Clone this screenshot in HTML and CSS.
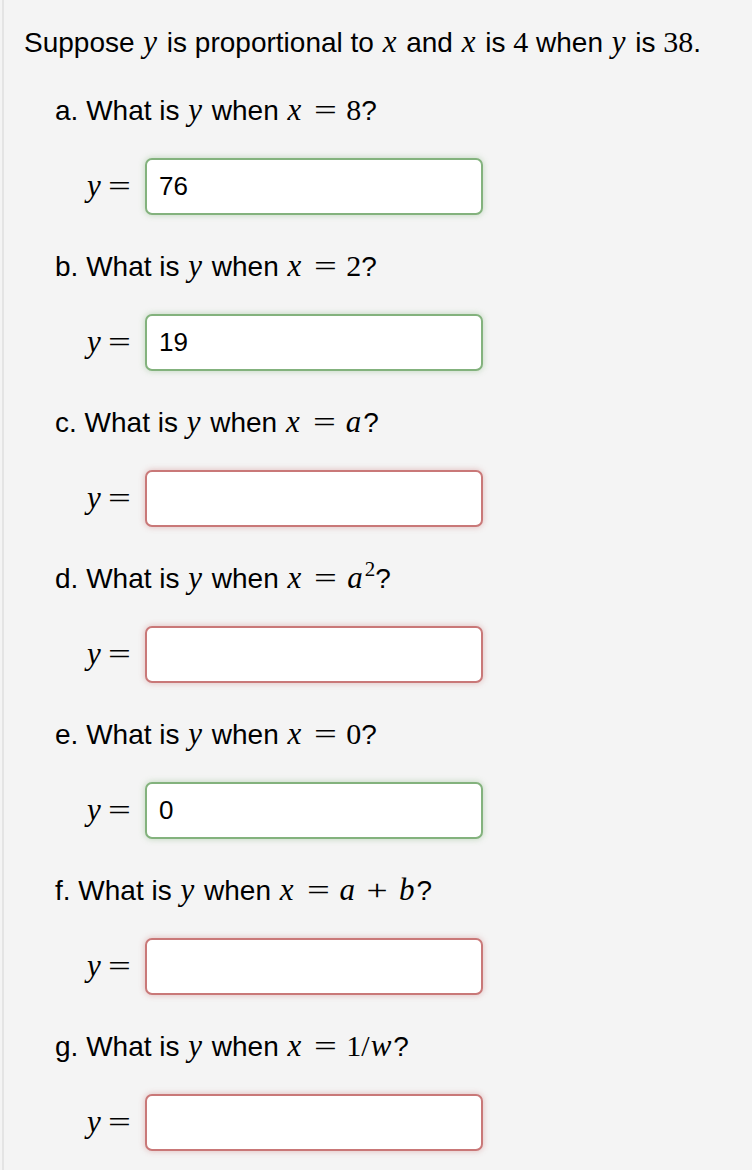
FILE: index.html
```html
<!DOCTYPE html>
<html>
<head>
<meta charset="utf-8">
<link rel="stylesheet" href="styles.css">
</head>
<body>
<div class="page">
  <p class="title">Suppose <i class="m">y</i> is proportional to <i class="m">x</i> and <i class="m">x</i> is <span class="n">4</span> when <i class="m">y</i> is <span class="n">38</span>.</p>

  <div class="item">
    <p class="q">a. What is <i class="m">y</i> when <i class="m">x</i><span class="eq">=</span><span class="n">8</span>?</p>
    <div class="ans"><span class="lbl"><i class="m">y</i><span class="eq eq2">=</span></span><div class="inp ok">76</div></div>
  </div>

  <div class="item">
    <p class="q">b. What is <i class="m">y</i> when <i class="m">x</i><span class="eq">=</span><span class="n">2</span>?</p>
    <div class="ans"><span class="lbl"><i class="m">y</i><span class="eq eq2">=</span></span><div class="inp ok">19</div></div>
  </div>

  <div class="item">
    <p class="q">c. What is <i class="m">y</i> when <i class="m">x</i><span class="eq">=</span><i class="m">a</i>?</p>
    <div class="ans"><span class="lbl"><i class="m">y</i><span class="eq eq2">=</span></span><div class="inp bad"></div></div>
  </div>

  <div class="item">
    <p class="q">d. What is <i class="m">y</i> when <i class="m">x</i><span class="eq">=</span><i class="m">a</i><sup class="n sup">2</sup>?</p>
    <div class="ans"><span class="lbl"><i class="m">y</i><span class="eq eq2">=</span></span><div class="inp bad"></div></div>
  </div>

  <div class="item">
    <p class="q">e. What is <i class="m">y</i> when <i class="m">x</i><span class="eq">=</span><span class="n">0</span>?</p>
    <div class="ans"><span class="lbl"><i class="m">y</i><span class="eq eq2">=</span></span><div class="inp ok">0</div></div>
  </div>

  <div class="item">
    <p class="q">f. What is <i class="m">y</i> when <i class="m">x</i><span class="eq">=</span><i class="m">a</i><span class="plus">+</span><i class="m">b</i>?</p>
    <div class="ans"><span class="lbl"><i class="m">y</i><span class="eq eq2">=</span></span><div class="inp bad"></div></div>
  </div>

  <div class="item">
    <p class="q">g. What is <i class="m">y</i> when <i class="m">x</i><span class="eq">=</span><span class="n">1/</span><i class="m">w</i>?</p>
    <div class="ans"><span class="lbl"><i class="m">y</i><span class="eq eq2">=</span></span><div class="inp bad"></div></div>
  </div>
</div>
</body>
</html>
```

FILE: styles.css
```css
html, body {
  margin: 0;
  padding: 0;
  background: #f4f4f4;
}
body {
  font-family: "Liberation Sans", Arial, sans-serif;
  font-size: 28px;
  color: #000;
}
.page {
  margin-left: 2px;
  border-left: 2px solid #e4e4e4;
  min-height: 1170px;
  box-sizing: border-box;
  padding: 27px 0 0 20px;
}
p {
  margin: 0;
  line-height: 30px;
  height: 30px;
  white-space: nowrap;
}
.title {
  margin-bottom: 38px;
}
.m {
  font-family: "Liberation Serif", "Times New Roman", serif;
  font-style: italic;
  font-size: 31px;
  padding: 0 2px 0 1px;
}
.n {
  font-family: "Liberation Serif", "Times New Roman", serif;
  font-size: 30px;
}
.sup {
  font-size: 21px;
  vertical-align: 12px;
  line-height: 0;
}
.eq {
  display: inline-block;
  font-family: "Liberation Serif", "Times New Roman", serif;
  font-size: 30px;
  width: 23px;
  text-align: center;
  margin: 0 9px 0 11px;
  transform: scaleX(1.35);
}
.plus {
  display: inline-block;
  font-family: "Liberation Serif", "Times New Roman", serif;
  font-size: 30px;
  width: 22px;
  text-align: center;
  margin: 0 10px 0 9px;
  transform: scaleX(1.25);
}
.eq2 {
  margin: 0 0 0 5px;
}
.item {
  padding-left: 31px;
  margin-bottom: 36px;
}
.q {
  margin-bottom: 33px;
}
.ans {
  display: flex;
  align-items: center;
  padding-left: 31px;
}
.lbl {
  width: 59px;
  flex: none;
  line-height: 30px;
}
.inp {
  box-sizing: border-box;
  width: 338px;
  height: 57px;
  background: #fff;
  border-radius: 7px;
  padding: 0 12px;
  display: flex;
  align-items: center;
  font-size: 26px;
}
.ok {
  border: 2px solid #83b27d;
  box-shadow: 0 0 6px rgba(120, 175, 110, 0.45);
}
.bad {
  border: 2px solid #c97878;
  box-shadow: 0 0 6px rgba(200, 110, 110, 0.45);
}
```
